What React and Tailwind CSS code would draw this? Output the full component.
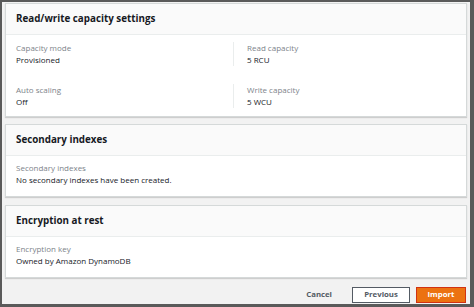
import React from "react";

const Field = ({ label, value }) => (
  <div className="flex flex-col">
    <span className="text-[8px] leading-[12px] text-[#7d838a]">{label}</span>
    <span className="text-[8px] leading-[12px] text-[#16191f]">{value}</span>
  </div>
);

const Card = ({ title, children, className = "" }) => (
  <div className={`bg-white border border-[#d5d9d9] shadow-[0_1px_1px_rgba(0,0,0,0.15)] ${className}`}>
    <div className="h-[31px] flex items-center px-[10px] bg-[#fafafa] border-b border-[#eaeded]">
      <h2 className="text-[9.8px] font-bold text-[#16191f]">{title}</h2>
    </div>
    {children}
  </div>
);

export default function App() {
  return (
    <div
      className="w-[474px] h-[307px] bg-[#5a5a5a] pl-[2px] pt-[2px] pr-[4px] pb-[3px]"
      style={{ fontFamily: '"Open Sans", "Noto Sans", sans-serif' }}
    >
      <div className="w-full h-full bg-[#f2f2f2] px-[3px] pt-[1px] flex flex-col">
        <Card title="Read/write capacity settings">
          <div className="grid grid-cols-[217px_1fr] px-[10px] pt-[7px] pb-[8px]">
            <div className="flex flex-col gap-[18px]">
              <Field label="Capacity mode" value="Provisioned" />
              <Field label="Auto scaling" value="Off" />
            </div>
            <div className="flex flex-col gap-[18px]">
              <div className="border-l border-[#eaeded] pl-[13px]">
                <Field label="Read capacity" value="5 RCU" />
              </div>
              <div className="border-l border-[#eaeded] pl-[13px]">
                <Field label="Write capacity" value="5 WCU" />
              </div>
            </div>
          </div>
        </Card>

        <Card title="Secondary indexes" className="mt-[7px]">
          <div className="px-[10px] pt-[6px] pb-[10px]">
            <Field label="Secondary indexes" value="No secondary indexes have been created." />
          </div>
        </Card>

        <Card title="Encryption at rest" className="mt-[8px]">
          <div className="px-[10px] pt-[6px] pb-[10px]">
            <Field label="Encryption key" value="Owned by Amazon DynamoDB" />
          </div>
        </Card>

        <div className="flex items-center justify-end gap-[6px] mt-[9px] pr-[1px]">
          <button className="text-[7.8px] font-bold text-[#545b64] px-[14px] h-[16px]">Cancel</button>
          <button className="text-[7.8px] font-bold text-[#545b64] w-[58px] h-[16px] bg-white border border-[#545b64]">
            Previous
          </button>
          <button className="text-[7.8px] font-bold text-white w-[50px] h-[16px] bg-[#ec7211] border border-[#d13212]">
            Import
          </button>
        </div>
      </div>
    </div>
  );
}
